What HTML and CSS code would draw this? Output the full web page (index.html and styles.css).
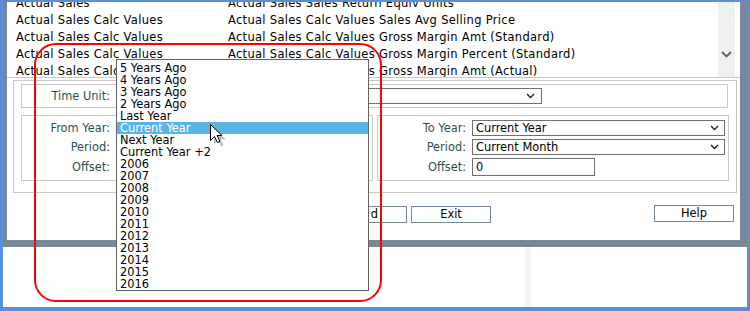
FILE: index.html
```html
<!DOCTYPE html>
<html lang="en">
<head>
  <meta charset="UTF-8">
  <meta name="viewport" content="width=device-width, initial-scale=1.0">
  <title>Time Unit</title>
  <link rel="stylesheet" href="styles.css">
</head>
<body>
  <div class="screen">
    <div class="window">
      <div class="content">
        <div class="listbox">
          <div class="rows">
            <div class="row"><span class="c1">Actual Sales</span><span>Actual Sales Sales Return Equiv Units</span></div>
            <div class="row"><span class="c1">Actual Sales Calc Values</span><span>Actual Sales Calc Values Sales Avg Selling Price</span></div>
            <div class="row"><span class="c1">Actual Sales Calc Values</span><span>Actual Sales Calc Values Gross Margin Amt (Standard)</span></div>
            <div class="row"><span class="c1">Actual Sales Calc Values</span><span>Actual Sales Calc Values Gross Margin Percent (Standard)</span></div>
            <div class="row"><span class="c1">Actual Sales Calc Values</span><span>Actual Sales Calc Values Gross Margin Amt (Actual)</span></div>
          </div>
          <div class="scrollbar">
            <svg width="11" height="7" viewBox="0 0 11 7"><path d="M1 1 L5.5 5.5 L10 1" fill="none" stroke="#606060" stroke-width="1.8"/></svg>
          </div>
        </div>

        <div class="group">
          <div class="box time-box">
            <div class="field">
              <label>Time Unit:</label>
              <div class="select time-select">
                <span></span>
                <svg width="9" height="6" viewBox="0 0 9 6"><path d="M1 1 L4.5 4.5 L8 1" fill="none" stroke="#222" stroke-width="1.4"/></svg>
              </div>
            </div>
          </div>
          <div class="pair">
            <div class="box">
              <div class="field">
                <label>From Year:</label>
                <div class="select"><span></span></div>
              </div>
              <div class="field">
                <label>Period:</label>
                <div class="select"><span></span></div>
              </div>
              <div class="field">
                <label>Offset:</label>
                <div class="input"></div>
              </div>
            </div>
            <div class="box">
              <div class="field">
                <label>To Year:</label>
                <div class="select"><span>Current Year</span>
                  <svg width="9" height="6" viewBox="0 0 9 6"><path d="M1 1 L4.5 4.5 L8 1" fill="none" stroke="#222" stroke-width="1.4"/></svg>
                </div>
              </div>
              <div class="field">
                <label>Period:</label>
                <div class="select"><span>Current Month</span>
                  <svg width="9" height="6" viewBox="0 0 9 6"><path d="M1 1 L4.5 4.5 L8 1" fill="none" stroke="#222" stroke-width="1.4"/></svg>
                </div>
              </div>
              <div class="field">
                <label>Offset:</label>
                <div class="input">0</div>
              </div>
            </div>
          </div>
        </div>

        <div class="buttons">
          <button class="btn first"><span class="hidden-part">Ad</span>d</button>
          <button class="btn">Exit</button>
          <button class="btn help">Help</button>
        </div>
      </div>
    </div>
    <div class="lower"><div class="divider"></div></div>
  </div>

  <!-- open year list of the From Year select -->
  <div class="dropdown">
    <div class="item">5 Years Ago</div>
    <div class="item">4 Years Ago</div>
    <div class="item">3 Years Ago</div>
    <div class="item">2 Years Ago</div>
    <div class="item">Last Year</div>
    <div class="item selected">Current Year</div>
    <div class="item">Next Year</div>
    <div class="item">Current Year +2</div>
    <div class="item">2006</div>
    <div class="item">2007</div>
    <div class="item">2008</div>
    <div class="item">2009</div>
    <div class="item">2010</div>
    <div class="item">2011</div>
    <div class="item">2012</div>
    <div class="item">2013</div>
    <div class="item">2014</div>
    <div class="item">2015</div>
    <div class="item">2016</div>
  </div>

  <div class="callout"></div>

  <svg class="cursor" width="16" height="22" viewBox="0 0 16 22">
    <path d="M2.5 3.5 L2.5 19.5 L6.5 15.5 L9.5 21.5 L12 20.3 L9 14.5 L14.5 14.5 Z" fill="#000" opacity="0.25" transform="translate(1.5 1)"/>
    <path d="M0.5 0.5 L0.5 16.5 L4.5 12.5 L7.5 18.5 L10 17.3 L7 11.5 L12 11.5 Z" fill="#fff" stroke="#000" stroke-width="1" stroke-linejoin="miter"/>
  </svg>
</body>
</html>
```

FILE: styles.css
```css
body {
  margin: 0;
  width: 750px;
  height: 311px;
  overflow: hidden;
  position: relative;
  background-color: #5b8fd5;
  font-family: "DejaVu Sans", Verdana, sans-serif;
  font-size: 11.4px;
  color: #000;
}
.screen {
  padding: 2px 3px 4px 3px;
}
.window {
  background-color: #778899;
  padding: 0 7px 7px 4px;
}
.content {
  background-color: #fff;
  height: 238px;
}

/* list at the top */
.listbox {
  height: 76px;
  box-sizing: border-box;
  border-bottom: 1px solid #c8c8c8;
  display: flex;
  overflow: hidden;
}
.rows {
  flex: 1;
  padding-left: 9px;
  margin-top: -7px;
  font-size: 11.5px;
  letter-spacing: 0.3px;
}
.row {
  display: flex;
  height: 17px;
  line-height: 17px;
  white-space: nowrap;
}
.c1 {
  width: 212px;
  flex: none;
}
.scrollbar {
  width: 17px;
  margin-right: 5px;
  background-color: #f0f0f0;
  display: flex;
  justify-content: center;
  align-items: flex-start;
  padding-top: 49px;
  box-sizing: border-box;
}

/* options group */
.group {
  margin: 2px 3px 0 6px;
  height: 113px;
  box-sizing: border-box;
  border: 1px solid #c8c8c8;
  padding: 3px 0 0 7px;
}
.box {
  border: 1px solid #c8c8c8;
  box-sizing: border-box;
}
.time-box {
  width: 707px;
  height: 24px;
  display: flex;
  align-items: center;
}
.pair {
  display: flex;
  gap: 4px;
  margin-top: 7px;
}
.pair .box {
  width: 352px;
  height: 66px;
  padding-top: 4px;
  display: flex;
  flex-direction: column;
  gap: 3px;
}
.field {
  display: flex;
  align-items: center;
}
.field label {
  width: 88px;
  margin-right: 6px;
  text-align: right;
  color: #2f4f4f;
}
.select {
  width: 253px;
  height: 16px;
  box-sizing: border-box;
  border: 1px solid #707070;
  display: flex;
  align-items: center;
  justify-content: space-between;
  padding: 0 5px 0 3px;
  line-height: 14px;
  white-space: nowrap;
}
.time-select {
  width: 426px;
  padding-right: 6px;
}
.input {
  width: 123px;
  height: 18px;
  box-sizing: border-box;
  border: 1px solid #707070;
  padding-left: 3px;
  line-height: 16px;
}

/* buttons */
.buttons {
  display: flex;
  align-items: flex-start;
  gap: 4px;
  margin-top: 13px;
}
.btn {
  width: 80px;
  height: 17px;
  padding: 0;
  border: 1px solid #778899;
  background-color: #fff;
  font-family: "DejaVu Sans", Verdana, sans-serif;
  font-size: 11.4px;
  line-height: 15px;
  color: #000;
}
.hidden-part {
  visibility: hidden;
}
.btn.first {
  margin-left: 320px;
}
.btn.help {
  margin-left: auto;
  margin-right: 6px;
  margin-top: -1px;
}

.lower {
  height: 60px;
  background-color: #fff;
  display: flex;
}
.divider {
  margin-left: 522px;
  width: 6px;
  background-color: #f3f3f3;
}

/* open dropdown list */
.dropdown {
  position: absolute;
  left: 116px;
  top: 59px;
  width: 253px;
  height: 232px;
  box-sizing: border-box;
  border: 1px solid #646464;
  background-color: #fff;
  padding-top: 2px;
}
.item {
  height: 12px;
  line-height: 12px;
  padding-left: 3px;
  white-space: nowrap;
}
.item.selected {
  background-color: #5bb4e4;
  color: #fff;
}

/* red annotation */
.callout {
  position: absolute;
  left: 34px;
  top: 43px;
  width: 348px;
  height: 259px;
  box-sizing: border-box;
  border: 2px solid #ff0000;
  border-radius: 22px;
}
.cursor {
  position: absolute;
  left: 210px;
  top: 124px;
}
```
